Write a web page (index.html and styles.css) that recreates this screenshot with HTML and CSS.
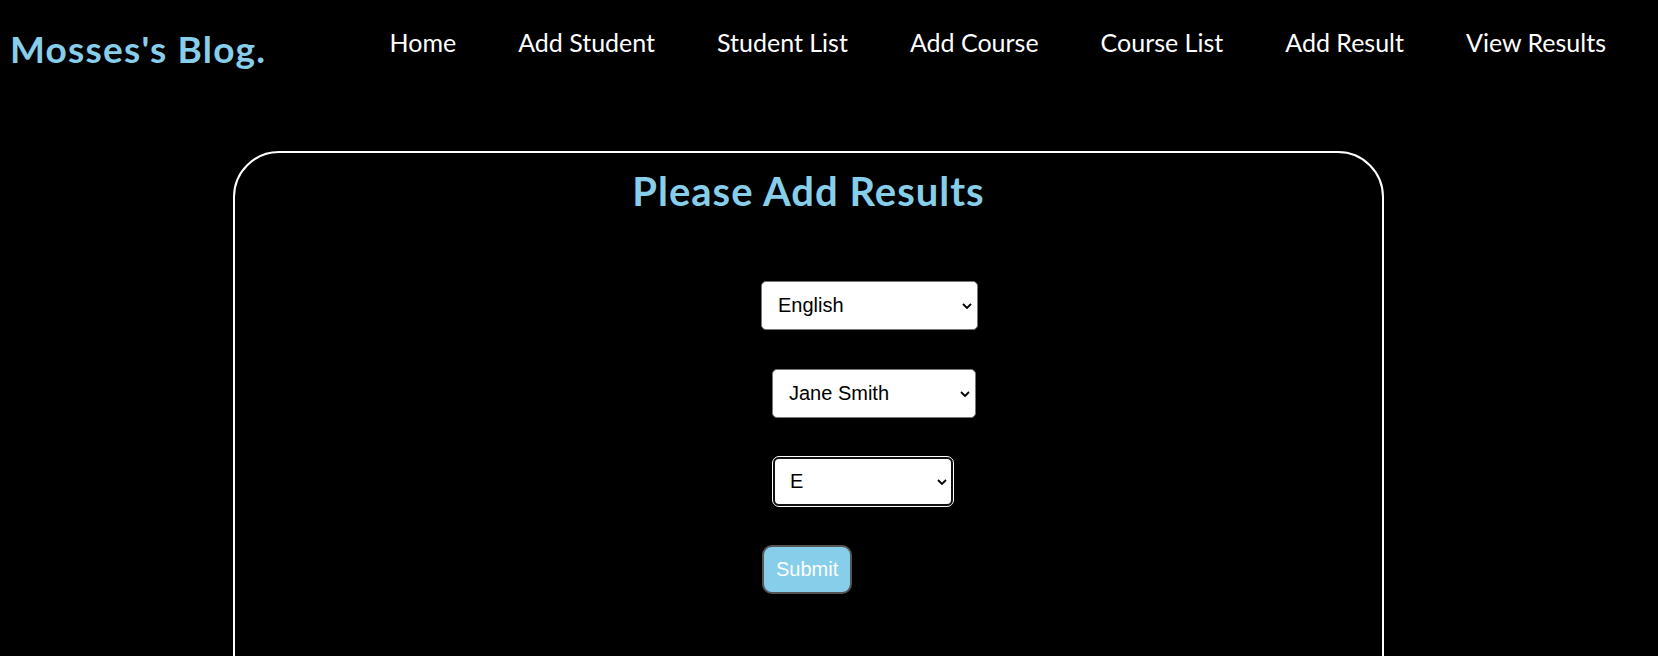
FILE: index.html
```html
<!DOCTYPE html>
<html lang="en">
<head>
<meta charset="utf-8">
<title>Mosses's Blog - Add Result</title>
<link rel="stylesheet" href="styles.css">
</head>
<body>
<header class="header">
  <div class="logo">Mosses's Blog.</div>
  <nav>
    <ul class="nav">
      <li><a href="#">Home</a></li>
      <li><a href="#">Add Student</a></li>
      <li><a href="#">Student List</a></li>
      <li><a href="#">Add Course</a></li>
      <li><a href="#">Course List</a></li>
      <li><a href="#">Add Result</a></li>
      <li><a href="#">View Results</a></li>
    </ul>
  </nav>
</header>
<main class="card">
  <h2 class="title">Please Add Results</h2>
  <form class="form">
    <div class="field field-course">
      <select class="select select-course">
        <option>English</option>
        <option>Mathematics</option>
      </select>
      <svg class="chev" width="10" height="6" viewBox="0 0 10 6"><path d="M1 1 L5 5 L9 1" fill="none" stroke="#000" stroke-width="1.8"/></svg>
    </div>
    <div class="field field-student">
      <select class="select select-student">
        <option>Jane Smith</option>
        <option>John Doe</option>
      </select>
      <svg class="chev" width="10" height="6" viewBox="0 0 10 6"><path d="M1 1 L5 5 L9 1" fill="none" stroke="#000" stroke-width="1.8"/></svg>
    </div>
    <div class="field field-grade">
      <select class="select select-grade focused">
        <option>E</option>
        <option>A</option>
      </select>
      <svg class="chev" width="10" height="6" viewBox="0 0 10 6"><path d="M1 1 L5 5 L9 1" fill="none" stroke="#000" stroke-width="1.8"/></svg>
    </div>
    <button type="button" class="submit">Submit</button>
  </form>
</main>
</body>
</html>
```

FILE: styles.css
```css
html, body {
  margin: 0;
  padding: 0;
  background: #000;
  overflow: hidden;
}

body {
  font-family: "Lato", "Open Sans", sans-serif;
  color: #fff;
}

.header {
  display: flex;
  justify-content: space-between;
  align-items: flex-start;
  padding: 27px 52px 0 10px;
}

.logo {
  font-size: 37px;
  letter-spacing: 1.2px;
  font-weight: 700;
  color: #87ceeb;
  line-height: 44px;
}

.nav {
  display: flex;
  gap: 62px;
  list-style: none;
  margin: 0;
  padding: 0;
}

.nav a {
  color: #fff;
  text-decoration: none;
  font-size: 25px;
  line-height: 30px;
}

.card {
  box-sizing: border-box;
  width: 1151px;
  height: 600px;
  margin: 80px 0 0 233px;
  border: 2px solid #fff;
  border-radius: 46px;
  padding-top: 14px;
}

.title {
  margin: 0;
  text-align: center;
  font-size: 40px;
  letter-spacing: 1px;
  line-height: 48px;
  font-weight: 700;
  color: #87ceeb;
}

.form {
  display: flex;
  flex-direction: column;
  align-items: flex-start;
  gap: 39px;
  margin-top: 66px;
  padding-left: 526px;
}

.field {
  position: relative;
}

.field-student {
  margin-left: 11px;
}

.field-grade {
  margin-left: 12px;
}

.select {
  appearance: none;
  -webkit-appearance: none;
  box-sizing: border-box;
  display: block;
  height: 49px;
  padding: 12px 16px;
  border: 1px solid #767676;
  border-radius: 5px;
  background: #fff;
  color: #000;
  font-family: "Liberation Sans", Arial, sans-serif;
  font-size: 20px;
  line-height: 23px;
  margin: 0;
}

.select-course {
  width: 217px;
}

.select-student {
  width: 204px;
}

.select-grade {
  width: 180px;
}

.select.focused {
  border: 2px solid #101010;
  outline: 1px solid #fff;
  border-radius: 6px;
  padding: 11px 15px;
}

.chev {
  position: absolute;
  right: 6px;
  top: 50%;
  margin-top: -3px;
  pointer-events: none;
}

.submit {
  box-sizing: border-box;
  margin-left: 1px;
  height: 49px;
  width: 90px;
  padding: 11px 12px;
  border: 2px solid #555;
  border-radius: 10px;
  background: #87ceeb;
  color: #fff;
  font-family: "Liberation Sans", Arial, sans-serif;
  font-size: 20px;
  line-height: 23px;
}
```
